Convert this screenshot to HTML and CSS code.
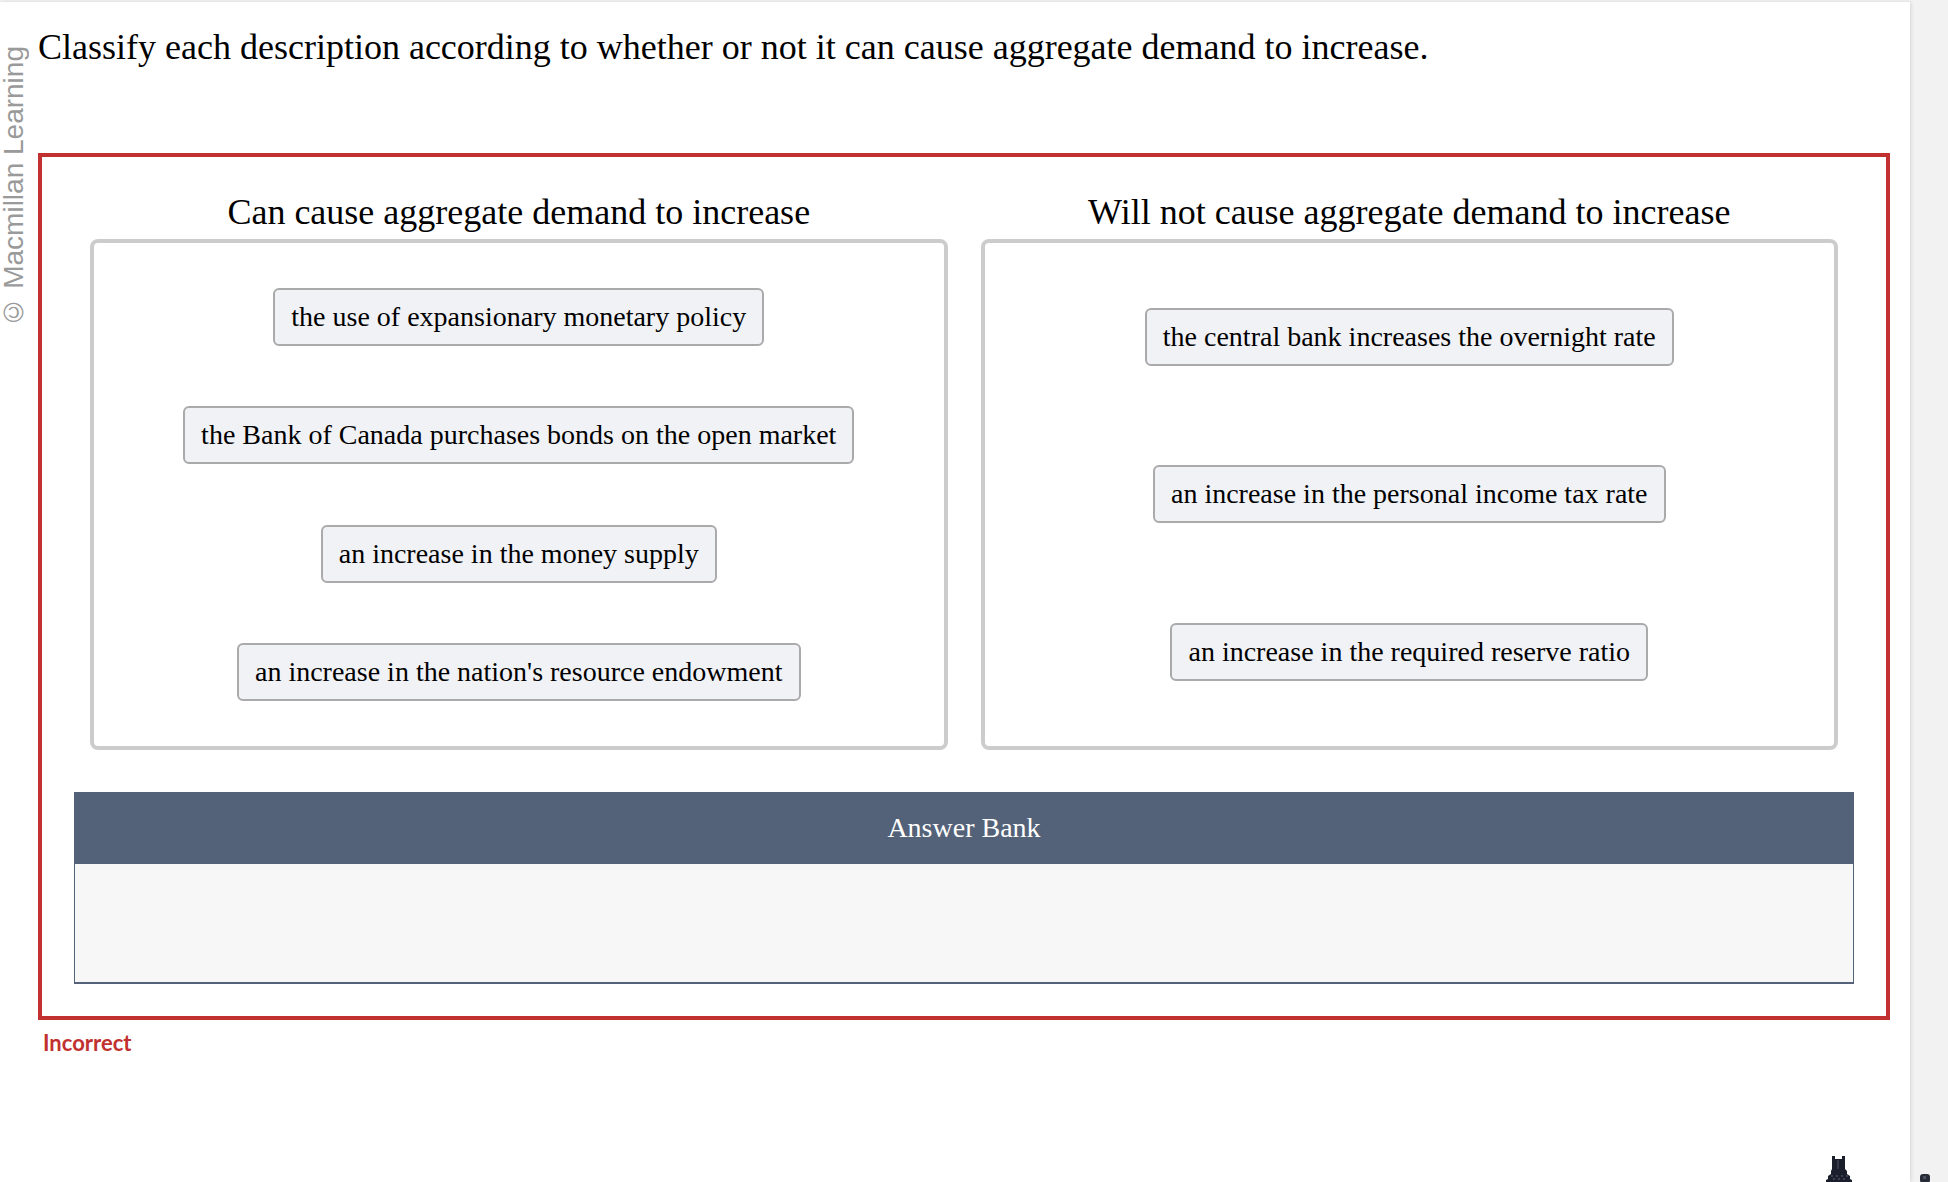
FILE: index.html
```html
<!DOCTYPE html>
<html lang="en">
<head>
    <meta charset="UTF-8">
    <title>Classify descriptions</title>
    <link rel="stylesheet" href="styles.css">
</head>
<body>
    <div class="page">
        <div class="copyright">© Macmillan Learning</div>
        <p class="question">Classify each description according to whether or not it can cause aggregate demand to increase.</p>
        <div class="activity">
            <div class="columns">
                <div class="col">
                    <h2>Can cause aggregate demand to increase</h2>
                    <div class="zone">
                        <div class="chip">the use of expansionary monetary policy</div>
                        <div class="chip">the Bank of Canada purchases bonds on the open market</div>
                        <div class="chip">an increase in the money supply</div>
                        <div class="chip">an increase in the nation's resource endowment</div>
                    </div>
                </div>
                <div class="col">
                    <h2>Will not cause aggregate demand to increase</h2>
                    <div class="zone">
                        <div class="chip">the central bank increases the overnight rate</div>
                        <div class="chip">an increase in the personal income tax rate</div>
                        <div class="chip">an increase in the required reserve ratio</div>
                    </div>
                </div>
            </div>
            <div class="bank">
                <div class="bank_head">Answer Bank</div>
                <div class="bank_body"></div>
            </div>
        </div>
        <div class="feedback">Incorrect</div>
    </div>
    <!-- little floating widgets at the bottom edge -->
    <svg class="widget" width="26" height="26" viewBox="0 0 26 26">
        <path d="M6 0h3v3h7V0h3v13l2 2v3l3 2v3l2 1v2H0v-2l2-1v-3l3-2v-3l1-2z" fill="#1b1f2b"/>
        <rect x="11" y="4" width="2" height="9" fill="#343a4a"/>
        <rect x="5" y="19" width="2" height="2" fill="#3b4252"/>
        <rect x="10" y="19" width="2" height="2" fill="#3b4252"/>
        <rect x="15" y="19" width="2" height="2" fill="#3b4252"/>
        <rect x="20" y="19" width="2" height="2" fill="#3b4252"/>
        <rect x="7" y="22" width="2" height="2" fill="#3b4252"/>
        <rect x="12" y="22" width="2" height="2" fill="#3b4252"/>
        <rect x="17" y="22" width="2" height="2" fill="#3b4252"/>
    </svg>
    <svg class="widget2" width="10" height="9" viewBox="0 0 10 9">
        <rect x="0" y="0" width="10" height="9" rx="3" fill="#262b36"/>
        <rect x="3" y="2" width="3" height="3" fill="#4a5060"/>
    </svg>
</body>
</html>
```

FILE: styles.css
```css
*{
    margin:0;padding:0;
}
html,body{
    width:100%;
    height:100%;
    overflow:hidden;
}
body{
    position:relative;
    background-color:#f2f2f2;
    color:#000;
    font-family:"Liberation Serif", "Times New Roman", serif;
}
/* white sheet */
.page{
    position:relative;
    box-sizing:border-box;
    width:1910px;
    height:1180px;
    margin-top:2px;
    padding:24px 0 0 38px;
    background-color:#fff;
    box-shadow:1px 0 4px rgba(0,0,0,0.12);
}
.copyright{
    position:absolute;
    left:0;
    top:44px;
    writing-mode:vertical-rl;
    transform:rotate(180deg);
    font-family:"Liberation Sans", Arial, sans-serif;
    font-size:28px;
    line-height:28px;
    color:#9a9a9a;
}
.question{
    font-size:36px;
}
.activity{
    box-sizing:border-box;
    width:1852px;
    margin-top:85px;
    padding:34px 32px 32px;
    border:4px solid #c1312f;
}
.columns{
    display:grid;
    grid-template-columns:1fr 1fr;
    gap:33px;
    margin:0 16px;
}
.col h2{
    margin-bottom:6px;
    font-family:"Liberation Serif", "Times New Roman", serif;
    font-size:36px;
    font-weight:normal;
    text-align:center;
}
.zone{
    box-sizing:border-box;
    height:511px;
    padding:15px;
    border:4px solid #ccc;
    border-radius:8px;
    display:flex;
    flex-direction:column;
    justify-content:space-around;
    align-items:center;
}
.chip{
    padding:11px 16px;
    font-size:28px;
    background-color:#f1f2f6;
    border:2px solid #aaa;
    border-radius:6px;
    white-space:nowrap;
}
.bank{
    margin-top:42px;
}
.bank_head{
    height:72px;
    line-height:72px;
    font-size:28px;
    text-align:center;
    color:#fff;
    background-color:#536278;
}
.bank_body{
    box-sizing:border-box;
    height:120px;
    background-color:#f7f7f7;
    border:1px solid #536278;
    border-top:0;
    border-bottom-width:2px;
}
.feedback{
    margin:9px 0 0 5px;
    font-family:Lato, "Open Sans", sans-serif;
    font-weight:700;
    font-size:22px;
    color:#c1312f;
}
.widget{
    position:absolute;
    left:1826px;
    top:1156px;
}
.widget2{
    position:absolute;
    left:1920px;
    top:1174px;
}
```
